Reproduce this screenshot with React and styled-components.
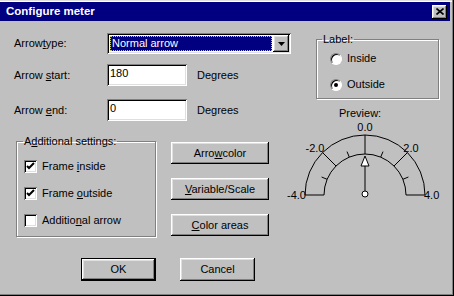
import React from 'react';
import styled, { createGlobalStyle } from 'styled-components';

const GlobalStyle = createGlobalStyle`
  html, body {
    margin: 0;
    padding: 0;
    background: #c0c0c0;
  }
  body {
    font-family: "Liberation Sans", Arial, sans-serif;
    font-size: 11px;
    line-height: 13px;
    color: #000;
  }
`;

const Window = styled.div`
  width: 454px;
  height: 296px;
  box-sizing: border-box;
  padding: 2px 4px 0 0;
  background: #c0c0c0;
  box-shadow: inset -1px -1px #000, inset -2px -2px #808080,
    inset 0 1px #dfdfdf, inset 0 2px #fff;
  overflow: hidden;
`;

const TitleBar = styled.div`
  height: 19px;
  display: flex;
  align-items: center;
  justify-content: space-between;
  padding: 0 3px 0 6px;
  background: #000080;
`;

const Title = styled.span`
  color: #fff;
  font-weight: bold;
  font-size: 11.5px;
`;

const raised = `
  background: #c0c0c0;
  box-shadow: inset -1px -1px #000, inset 1px 1px #fff,
    inset -2px -2px #808080, inset 2px 2px #dfdfdf;
`;

const sunken = `
  box-shadow: inset 1px 1px #808080, inset -1px -1px #fff,
    inset 2px 2px #000, inset -2px -2px #dfdfdf;
`;

const CloseButton = styled.div`
  ${raised}
  width: 15px;
  height: 14px;
  display: flex;
  align-items: center;
  justify-content: center;
`;

const Main = styled.div`
  display: flex;
  padding: 12px 0 0 14px;
`;

const LeftColumn = styled.div`
  width: 277px;
  display: flex;
  flex-direction: column;
`;

const RightColumn = styled.div`
  width: 149px;
  display: flex;
  flex-direction: column;
`;

const FormRow = styled.div`
  display: flex;
  align-items: center;
  height: ${(p) => p.$h}px;
  margin-top: ${(p) => p.$top || 0}px;
`;

const FieldLabel = styled.span`
  width: 93px;
`;

const Combo = styled.div`
  ${sunken}
  width: 184px;
  height: 21px;
  box-sizing: border-box;
  padding: 2px;
  background: #fff;
  display: flex;
`;

const Selected = styled.div`
  flex: 1;
  margin: 1px;
  padding-left: 2px;
  background: #000080;
  color: #fff;
  outline: 1px dotted #c8c864;
  outline-offset: -1px;
  display: flex;
  align-items: center;
`;

const DropButton = styled.div`
  ${raised}
  width: 16px;
  display: flex;
  align-items: center;
  justify-content: center;
`;

const TextInput = styled.div`
  ${sunken}
  width: 80px;
  height: 22px;
  box-sizing: border-box;
  padding: 3px 3px 0;
  background: #fff;
`;

const Unit = styled.span`
  margin-left: 10px;
`;

const Settings = styled.div`
  display: flex;
  align-items: flex-start;
  margin: 14px 0 0 2px;
`;

const GroupBox = styled.fieldset`
  margin: 0;
  width: ${(p) => p.$w}px;
  box-sizing: border-box;
  padding: ${(p) => p.$pad};
  border: 1px solid #808080;
  box-shadow: inset 1px 1px #fff, 1px 1px #fff;
  display: flex;
  flex-direction: column;
  gap: ${(p) => p.$gap}px;
`;

const Legend = styled.legend`
  padding: 0 1px;
  line-height: 13px;
`;

const OptionRow = styled.label`
  display: flex;
  align-items: center;
  height: 13px;
  gap: 5px;
  margin-left: ${(p) => p.$indent || 0}px;
`;

const CheckBox = styled.span`
  ${sunken}
  width: 13px;
  height: 13px;
  background: #fff;
  display: flex;
  align-items: center;
  justify-content: center;
`;

const Radio = styled.span`
  width: 12px;
  height: 12px;
  box-sizing: border-box;
  border-radius: 50%;
  border: 1px solid;
  border-color: #808080 #fff #fff #808080;
  box-shadow: inset 1px 1px #000;
  background: #fff;
  display: flex;
  align-items: center;
  justify-content: center;
`;

const Dot = styled.span`
  width: 4px;
  height: 4px;
  border-radius: 50%;
  background: #000;
`;

const ButtonColumn = styled.div`
  display: flex;
  flex-direction: column;
  gap: 14px;
  margin: 7px 0 0 15px;
`;

const Button = styled.button`
  ${raised}
  width: ${(p) => p.$w}px;
  height: ${(p) => p.$h}px;
  border: none;
  padding: 0;
  font: inherit;
  color: #000;
  ${(p) => p.$default && `
    border: 1px solid #000;
    box-sizing: border-box;
  `}
`;

const Footer = styled.div`
  display: flex;
  gap: 24px;
  padding-left: 81px;
  margin-top: 21px;
`;

const LabelGroup = styled.div`
  margin-left: 25px;
`;

const PreviewLabel = styled.div`
  margin: 8px 0 0 48px;
`;

const MeterSvg = styled.svg`
  display: block;
  overflow: visible;
  font-family: "Liberation Sans", Arial, sans-serif;
  font-size: 11px;
`;

const CX = 74;
const CY = 75;
const R = 60;
const r = 41;

const polar = (rad, deg) => {
  const a = (deg * Math.PI) / 180;
  return [CX + rad * Math.cos(a), CY - rad * Math.sin(a)];
};

const tick = (deg, r1, r2) => {
  const [x1, y1] = polar(r1, deg);
  const [x2, y2] = polar(r2, deg);
  return `M${x1.toFixed(1)} ${y1.toFixed(1)}L${x2.toFixed(1)} ${y2.toFixed(1)}`;
};

function Meter() {
  const major = [135, 90, 45].map((d) => tick(d, r, R)).join('');
  const minor = [157.5, 112.5, 67.5, 22.5].map((d) => tick(d, r, r + 6)).join('');
  return (
    <MeterSvg width="149" height="82" viewBox="0 0 149 82">
      <g fill="none" stroke="#000" strokeWidth="1">
        <path d={`M${CX - R} ${CY}A${R} ${R} 0 0 1 ${CX + R} ${CY}`} />
        <path d={`M${CX - r} ${CY}A${r} ${r} 0 0 1 ${CX + r} ${CY}`} />
        <path d={`M${CX - R} ${CY}H${CX - r}M${CX + r} ${CY}H${CX + R}`} />
        <path d={major} />
        <path d={minor} />
        <path d={`M${CX} ${CY - 3}V${CY - 29}`} />
      </g>
      <polygon
        points={`${CX},${CY - 39} ${CX - 4},${CY - 29} ${CX + 4},${CY - 29}`}
        fill="#fff"
        stroke="#000"
      />
      <circle cx={CX} cy={CY - 1} r="3" fill="#fff" stroke="#000" />
      <text x={CX} y="11" textAnchor="middle">0.0</text>
      <text x="24" y="32" textAnchor="middle">-2.0</text>
      <text x="120" y="32" textAnchor="middle">2.0</text>
      <text x={CX - R + 1} y="79" textAnchor="end">-4.0</text>
      <text x={CX + R - 1} y="79">4.0</text>
    </MeterSvg>
  );
}

const Check = () => (
  <svg width="9" height="9" viewBox="0 0 9 9">
    <path d="M1 4l2 2 5-5" fill="none" stroke="#000" strokeWidth="2" />
  </svg>
);

export default function App() {
  return (
    <>
      <GlobalStyle />
      <Window>
        <TitleBar>
          <Title>Configure meter</Title>
          <CloseButton>
            <svg width="8" height="7" viewBox="0 0 8 7">
              <path d="M0.5 0.5l7 6M7.5 0.5l-7 6" stroke="#000" strokeWidth="1.6" />
            </svg>
          </CloseButton>
        </TitleBar>
        <Main>
          <LeftColumn>
            <FormRow $h={21}>
              <FieldLabel>Arrow<u>t</u>ype:</FieldLabel>
              <Combo>
                <Selected>Normal arrow</Selected>
                <DropButton>
                  <svg width="7" height="4" viewBox="0 0 7 4">
                    <polygon points="0,0 7,0 3.5,4" fill="#000" />
                  </svg>
                </DropButton>
              </Combo>
            </FormRow>
            <FormRow $h={22} $top={10}>
              <FieldLabel>Arrow <u>s</u>tart:</FieldLabel>
              <TextInput>180</TextInput>
              <Unit>Degrees</Unit>
            </FormRow>
            <FormRow $h={22} $top={13}>
              <FieldLabel>Arrow <u>e</u>nd:</FieldLabel>
              <TextInput>0</TextInput>
              <Unit>Degrees</Unit>
            </FormRow>
            <Settings>
              <GroupBox $w={140} $pad="12px 6px 9px" $gap={14}>
                <Legend>A<u>d</u>ditional settings:</Legend>
                <OptionRow $indent={1}>
                  <CheckBox><Check /></CheckBox>
                  <span>Frame <u>i</u>nside</span>
                </OptionRow>
                <OptionRow $indent={1}>
                  <CheckBox><Check /></CheckBox>
                  <span>Frame <u>o</u>utside</span>
                </OptionRow>
                <OptionRow $indent={1}>
                  <CheckBox />
                  <span>Additio<u>n</u>al arrow</span>
                </OptionRow>
              </GroupBox>
              <ButtonColumn>
                <Button $w={98} $h={22}>Arro<u>w</u>color</Button>
                <Button $w={98} $h={22}><u>V</u>ariable/Scale</Button>
                <Button $w={98} $h={22}><u>C</u>olor areas</Button>
              </ButtonColumn>
            </Settings>
          </LeftColumn>
          <RightColumn>
            <LabelGroup>
              <GroupBox $w={123} $pad="6px 5px 7px" $gap={13}>
                <Legend>Label:</Legend>
                <OptionRow $indent={8}>
                  <Radio />
                  <span>Inside</span>
                </OptionRow>
                <OptionRow $indent={8}>
                  <Radio><Dot /></Radio>
                  <span>Outside</span>
                </OptionRow>
              </GroupBox>
            </LabelGroup>
            <PreviewLabel>Preview:</PreviewLabel>
            <Meter />
          </RightColumn>
        </Main>
        <Footer>
          <Button $w={75} $h={23} $default>OK</Button>
          <Button $w={75} $h={23}>Cancel</Button>
        </Footer>
      </Window>
    </>
  );
}
